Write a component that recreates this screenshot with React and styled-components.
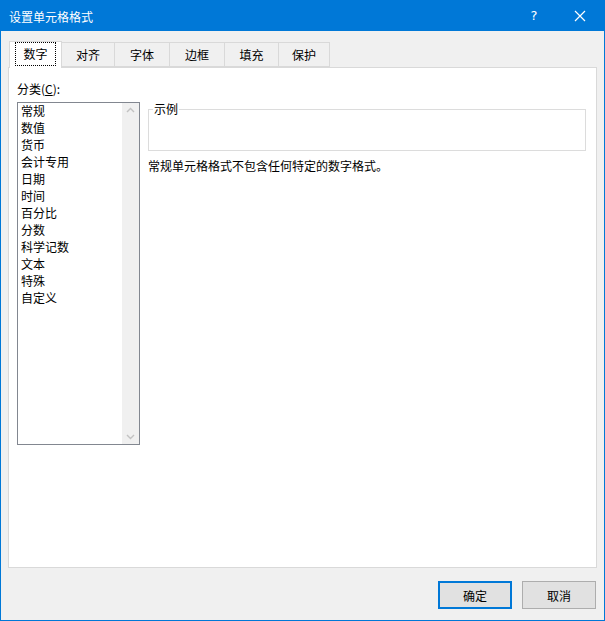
import { useState } from 'react';
import styled, { createGlobalStyle } from 'styled-components';

const GlobalStyle = createGlobalStyle`
  html, body {
    margin: 0;
    padding: 0;
    background: #f0f0f0;
  }
  body {
    font-family: "Noto Sans CJK SC", "Noto Sans", sans-serif;
    font-size: 12px;
    color: #000;
  }
`;

const Window = styled.div`
  width: 605px;
  height: 621px;
  box-sizing: border-box;
  border: 1px solid #0078d7;
  border-top: none;
  background: #f0f0f0;
  display: flex;
  flex-direction: column;
`;

const TitleBar = styled.div`
  height: 31px;
  flex-shrink: 0;
  background: #0078d7;
  color: #fff;
  display: flex;
  align-items: center;
  padding-left: 9px;
  padding-right: 2px;
  margin: 0 -1px;
  font-size: 12px;
`;

const Title = styled.div`
  flex: 1;
  padding-top: 1px;
`;

const TitleButton = styled.div`
  width: 46px;
  height: 31px;
  display: flex;
  align-items: center;
  justify-content: center;
  font-family: "DejaVu Sans", sans-serif;
  font-size: 13px;
`;

const Body = styled.div`
  flex: 1;
  display: flex;
  flex-direction: column;
  padding: 9px 7px 0 7px;
`;

const TabRow = styled.div`
  display: flex;
  align-items: flex-end;
  height: 27px;
  padding-left: 1px;
`;

const Tab = styled.div`
  box-sizing: border-box;
  height: ${(p) => (p.$active ? '27px' : '25px')};
  width: ${(p) => p.$w}px;
  display: flex;
  align-items: center;
  justify-content: center;
  background: ${(p) => (p.$active ? '#fff' : '#f0f0f0')};
  border: 1px solid #d9d9d9;
  border-bottom: ${(p) => (p.$active ? 'none' : '1px solid #d9d9d9')};
  margin-left: ${(p) => (p.$active ? '0' : '-1px')};
  margin-bottom: ${(p) => (p.$active ? '-1px' : '0')};
  position: relative;
  z-index: ${(p) => (p.$active ? 1 : 0)};
  padding-bottom: ${(p) => (p.$active ? '2px' : '0')};
`;

const FocusLabel = styled.span`
  outline: 1px dotted #000;
  padding: 2px 7px 3px;
`;

const Panel = styled.div`
  height: 501px;
  box-sizing: border-box;
  background: #fff;
  border: 1px solid #d9d9d9;
  display: flex;
  padding: 12px 10px 0 8px;
  gap: 8px;
`;

const LeftCol = styled.div`
  display: flex;
  flex-direction: column;
  width: 123px;
`;

const Label = styled.div`
  height: 22px;
  line-height: 18px;
  u {
    text-decoration: underline;
  }
`;

const ListBox = styled.div`
  height: 343px;
  box-sizing: border-box;
  border: 1px solid #828790;
  display: flex;
`;

const ListItems = styled.div`
  flex: 1;
  padding: 0 0 0 3px;
`;

const ListItem = styled.div`
  height: 17px;
  line-height: 16px;
  white-space: nowrap;
`;

const ScrollBar = styled.div`
  width: 17px;
  background: #f0f0f0;
  display: flex;
  flex-direction: column;
  justify-content: space-between;
  align-items: center;
  padding: 4px 0;
`;

const RightCol = styled.div`
  flex: 1;
  display: flex;
  flex-direction: column;
  padding-top: 21px;
`;

const GroupBox = styled.fieldset`
  margin: 0;
  height: 42px;
  box-sizing: border-box;
  border: 1px solid #dcdcdc;
  padding: 0;
  position: relative;
  margin-top: 8px;

  legend {
    position: absolute;
    top: -9px;
    left: 4px;
    background: #fff;
    padding: 0 1px;
    line-height: 16px;
  }
`;

const Description = styled.div`
  margin-top: 7px;
  line-height: 16px;
`;

const Footer = styled.div`
  flex: 1;
  display: flex;
  justify-content: flex-end;
  align-items: flex-start;
  padding: 13px 1px 0 0;
  gap: 10px;
`;

const Button = styled.button`
  width: 74px;
  height: 28px;
  box-sizing: border-box;
  background: #e1e1e1;
  border: ${(p) => (p.$primary ? '2px solid #0078d7' : '1px solid #adadad')};
  font-family: inherit;
  font-size: 12px;
  color: #000;
  padding: 0;
`;

const categories = ['常规', '数值', '货币', '会计专用', '日期', '时间', '百分比', '分数', '科学记数', '文本', '特殊', '自定义'];

const tabs = [
  { name: '数字', w: 53 },
  { name: '对齐', w: 54 },
  { name: '字体', w: 56 },
  { name: '边框', w: 56 },
  { name: '填充', w: 55 },
  { name: '保护', w: 52 },
];

const Chevron = ({ up }) => (
  <svg width="9" height="6" viewBox="0 0 9 6">
    <path d={up ? 'M1 5 L4.5 1.5 L8 5' : 'M1 1 L4.5 4.5 L8 1'} fill="none" stroke="#c2c2c2" strokeWidth="1.4" />
  </svg>
);

export default function App() {
  const [active] = useState(0);

  return (
    <>
      <GlobalStyle />
      <Window>
        <TitleBar>
          <Title>设置单元格格式</Title>
          <TitleButton>?</TitleButton>
          <TitleButton>
            <svg width="12" height="12" viewBox="0 0 12 12">
              <path d="M1 1 L11 11 M11 1 L1 11" stroke="#fff" strokeWidth="1.2" />
            </svg>
          </TitleButton>
        </TitleBar>
        <Body>
          <TabRow>
            {tabs.map((t, i) => (
              <Tab key={t.name} $active={i === active} $w={t.w}>
                {i === active ? <FocusLabel>{t.name}</FocusLabel> : t.name}
              </Tab>
            ))}
          </TabRow>
          <Panel>
            <LeftCol>
              <Label>
                分类(<u>C</u>):
              </Label>
              <ListBox>
                <ListItems>
                  {categories.map((c) => (
                    <ListItem key={c}>{c}</ListItem>
                  ))}
                </ListItems>
                <ScrollBar>
                  <Chevron up />
                  <Chevron />
                </ScrollBar>
              </ListBox>
            </LeftCol>
            <RightCol>
              <GroupBox>
                <legend>示例</legend>
              </GroupBox>
              <Description>常规单元格格式不包含任何特定的数字格式。</Description>
            </RightCol>
          </Panel>
          <Footer>
            <Button $primary>确定</Button>
            <Button>取消</Button>
          </Footer>
        </Body>
      </Window>
    </>
  );
}
